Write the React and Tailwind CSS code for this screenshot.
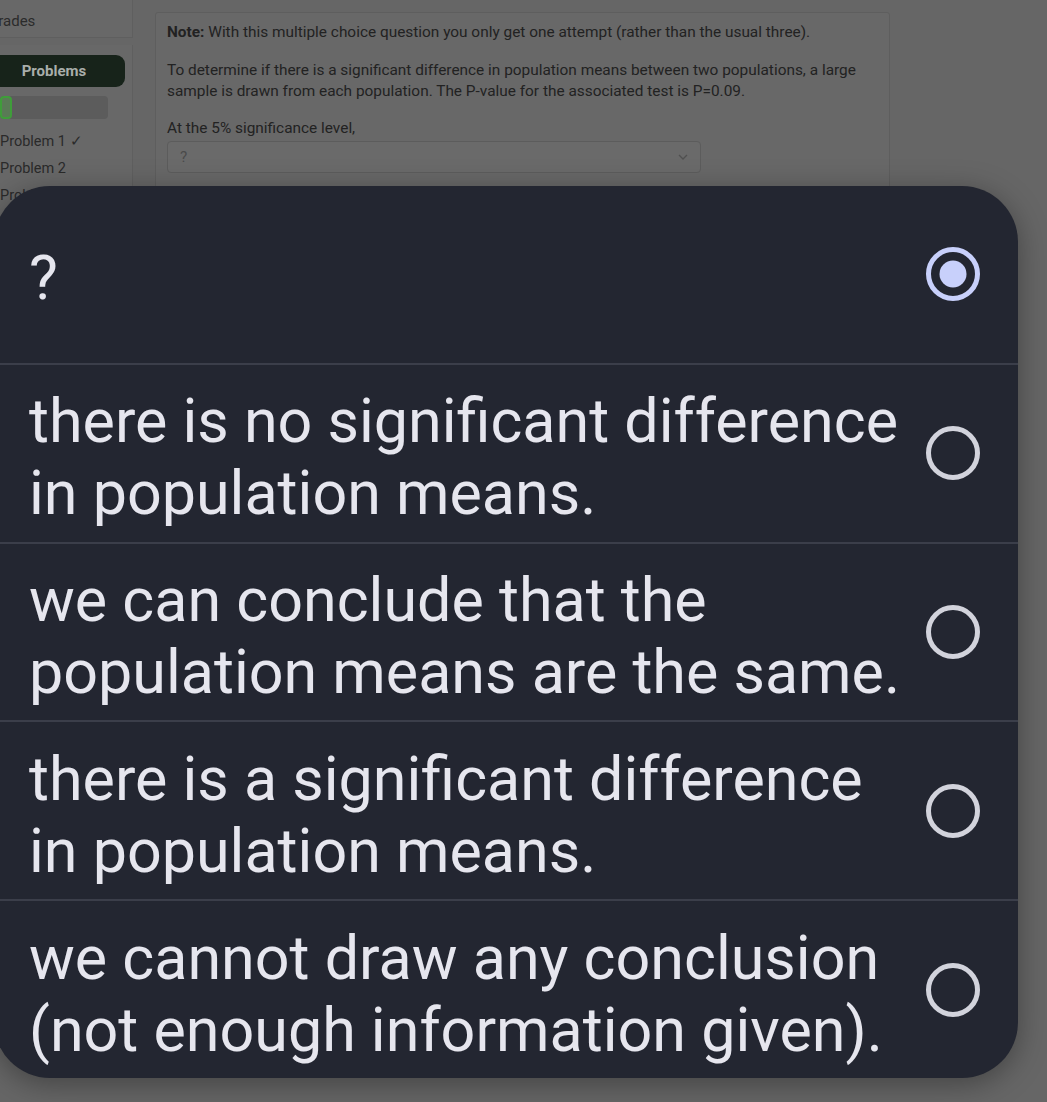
import React from "react";

const options = [
  "?",
  "there is no significant difference in population means.",
  "we can conclude that the population means are the same.",
  "there is a significant difference in population means.",
  "we cannot draw any conclusion (not enough information given).",
];

function Radio({ selected }) {
  if (selected) {
    return (
      <svg width="56" height="56" viewBox="0 0 56 56" className="shrink-0">
        <circle cx="28" cy="28" r="24.5" fill="none" stroke="#c8d0fb" strokeWidth="5" />
        <circle cx="28" cy="28" r="13.5" fill="#c8d0fb" />
      </svg>
    );
  }
  return (
    <svg width="56" height="56" viewBox="0 0 56 56" className="shrink-0">
      <circle cx="28" cy="28" r="24.5" fill="none" stroke="#d2d3dc" strokeWidth="5" />
    </svg>
  );
}

export default function App() {
  return (
    <div
      className="relative w-full h-[1102px] overflow-hidden bg-[#666666]"
      style={{ fontFamily: "Roboto, 'Liberation Sans', sans-serif" }}
    >
      {/* dimmed background page */}
      <div className="flex items-start gap-[22px]">
        <div className="w-[133px] flex flex-col gap-[7px] shrink-0">
          <div className="h-[38px] border-b border-r border-[#5f5f5f] bg-[#686868] -ml-[12px] pt-[11px] text-[15px] leading-[21px] text-[#2b2b2b]">
            Grades
          </div>
          <div className="border-r border-[#5f5f5f] bg-[#686868] pt-[10px] pb-[10px] flex flex-col">
            <div className="-ml-[17px] w-[142px] h-[32px] rounded-[9px] bg-[#17231a] flex items-center justify-center text-[15px] font-bold text-[#a9aeaa]">
              Problems
            </div>
            <div className="mt-[9px] w-[108px] h-[23px] rounded-[4px] bg-[#5c5c5c] flex items-stretch">
              <div className="w-[12px] rounded-[4px] border-2 border-[#3f9d3a] bg-[#5a7a56]" />
            </div>
            <div className="mt-[9px] text-[14.5px] leading-[27px] text-[#2a2a2a]">
              <div>Problem 1 ✓</div>
              <div>Problem 2</div>
              <div>Problem 3</div>
              <div>Problem 4</div>
            </div>
          </div>
        </div>
        <div className="mt-[12px] w-[735px] h-[260px] border border-[#5e5e5e] rounded-[3px] bg-[#686868] px-[11px] pt-[9px] text-[15.4px] leading-[21px] text-[#222222]">
          <p>
            <span className="font-bold">Note:</span> With this multiple choice question you only get one attempt (rather than the usual three).
          </p>
          <p className="mt-[17px] pr-[6px]">
            To determine if there is a significant difference in population means between two populations, a large sample is drawn from each population. The P-value for the associated test is P=0.09.
          </p>
          <p className="mt-[16px]">At the 5% significance level,</p>
          <div className="mt-[2px] w-[534px] h-[32px] border border-[#5c5c5c] rounded-[4px] bg-[#6a6a6a] flex items-center justify-between px-[12px] text-[#4a4a4a]">
            <span>?</span>
            <svg width="10" height="8" viewBox="0 0 10 8">
              <path d="M1 2 L5 6 L9 2" fill="none" stroke="#505050" strokeWidth="1.3" />
            </svg>
          </div>
        </div>
      </div>

      {/* dialog */}
      <div className="absolute left-[-6px] top-[186px] w-[1024px] h-[892px] rounded-[56px] bg-[#232631] overflow-hidden shadow-[0_6px_30px_rgba(0,0,0,0.35)] flex flex-col">
        {options.map((o, i) => (
          <div
            key={i}
            className={
              "flex-1 flex items-center justify-between pl-[35px] pr-[37px] " +
              (i > 0 ? "border-t-2 border-[#3b3e4a]" : "")
            }
          >
            <div className="w-[880px] pt-[8px] text-[61px] leading-[72px] text-[#e6e6ee]">
              {o}
            </div>
            <Radio selected={i === 0} />
          </div>
        ))}
      </div>
    </div>
  );
}
